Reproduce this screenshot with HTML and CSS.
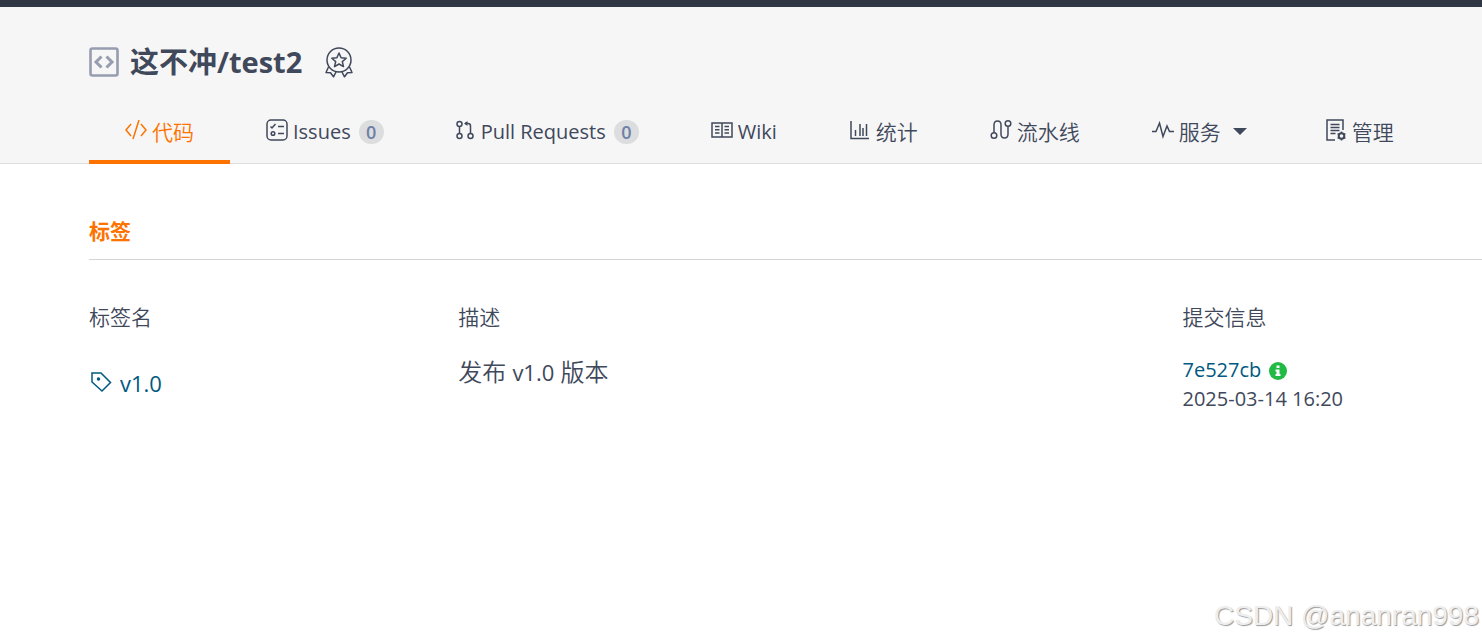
FILE: index.html
```
<!DOCTYPE html>
<html lang="zh-CN">

<head>
    <meta charset="UTF-8">
    <meta name="viewport" content="width=device-width, initial-scale=1.0">
    <title>这不冲/test2 标签</title>
    <link rel="stylesheet" href="styles.css">
</head>

<body>
    <div class="topbar"></div>
    <header class="header">
        <div class="project">
            <svg class="project-icon" viewBox="0 0 30 30" fill="none" stroke="#979db0">
                <rect x="1.5" y="1.5" width="27" height="27" rx="2" stroke-width="2.6" />
                <path d="M12.5 9.5L7 15l5.5 5.5M17.5 9.5L23 15l-5.5 5.5" stroke-width="3" />
            </svg>
            <h1 class="project-name">这不冲/test2</h1>
            <svg class="medal" viewBox="0 0 28 32" fill="none" stroke="#40485b" stroke-width="1.5" stroke-linejoin="round">
                <circle cx="14" cy="13" r="12" />
                <path d="M14 6l2.1 4.7 5.1.5-3.9 3.4 1.2 5-4.5-2.6-4.5 2.6 1.2-5-3.9-3.4 5.1-.5z" />
                <path d="M3.5 20L1 25.5l4.500.3 3 4L11 25M24.500 20l2.500 5.500-4.500.3-3 4L17 25" />
            </svg>
        </div>
        <nav class="tabs">
            <a class="tab active" href="#">
                <svg class="icon" viewBox="0 0 22 22" fill="none" stroke="currentColor" stroke-width="1.5">
                    <path d="M6 5L1 11l5 6M16 5l5 6-5 6M14 1L8 20" />
                </svg>
                <span>代码</span>
            </a>
            <a class="tab" href="#">
                <svg class="icon" viewBox="0 0 22 22" fill="none" stroke="currentColor" stroke-width="1.5">
                    <rect x="1" y="1" width="20" height="20" rx="4" />
                    <path d="M4.500 7.500l1.500 1.500 3.500-4M12 7.500h6M12 14.500h6" />
                    <circle cx="7" cy="14.500" r="1.800" />
                </svg>
                <span class="latin">Issues</span>
                <span class="count">0</span>
            </a>
            <a class="tab" href="#">
                <svg class="icon icon-pull" viewBox="0 0 18 22" fill="none" stroke="currentColor" stroke-width="1.500">
                    <circle cx="3.500" cy="5" r="2.500" />
                    <circle cx="3.500" cy="17" r="2.500" />
                    <circle cx="14.500" cy="17" r="2.500" />
                    <path d="M3.500 7.500v7M14.500 14.500V7q0-2.500-2.500-2.500H9" />
                    <path d="M11.500 2v5L8 4.500z" fill="currentColor" stroke="none" />
                </svg>
                <span class="latin">Pull Requests</span>
                <span class="count">0</span>
            </a>
            <a class="tab" href="#">
                <svg class="icon" viewBox="0 0 22 22" fill="none" stroke="currentColor" stroke-width="1.500">
                    <path d="M1 4h20v14H1zM11 4v14M4 7.500h4.500M4 10.800h4.500M4 14h4.500M13.500 7.500H18M13.500 10.800H18M13.500 14H18" />
                </svg>
                <span class="latin">Wiki</span>
            </a>
            <a class="tab" href="#">
                <svg class="icon" viewBox="0 0 22 22" fill="none" stroke="currentColor" stroke-width="1.500">
                    <path d="M2 2v17.500h18M6.500 17v-6M11 17V5M14 17V9M17.500 17V5" />
                </svg>
                <span>统计</span>
            </a>
            <a class="tab" href="#">
                <svg class="icon" viewBox="0 0 22 22" fill="none" stroke="currentColor" stroke-width="1.500">
                    <circle cx="4" cy="16.500" r="2.800" />
                    <circle cx="18" cy="4.500" r="2.800" />
                    <path d="M4 13.700V6q0-4 3.500-4T11 6v9q0 4 3.500 4t3.500-4V7.300" />
                </svg>
                <span>流水线</span>
            </a>
            <button class="tab" type="button">
                <svg class="icon" viewBox="0 0 22 22" fill="none" stroke="currentColor" stroke-width="1.500">
                    <path d="M0 12.500h4L7.500 4l3.500 13.500L15 7l2.500 5.500H22" />
                </svg>
                <span>服务</span>
                <span class="caret"></span>
            </button>
            <a class="tab" href="#">
                <svg class="icon" viewBox="0 0 22 22" fill="none" stroke="currentColor" stroke-width="1.500">
                    <path d="M10 21H2V1h16v10M5.500 5.500h9M5.500 8.500h9M5.500 11.500h9M5.500 14.500h5" />
                    <circle cx="16.500" cy="17" r="2.800" stroke-width="2" />
                    <path d="M16.500 12.500v2M16.500 19.500v2M12.600 14.700l1.800 1M18.600 18.300l1.800 1M12.600 19.300l1.800-1M18.600 15.700l1.800-1" />
                </svg>
                <span>管理</span>
            </a>
        </nav>
    </header>

    <main class="content">
        <h2 class="heading">标签</h2>
        <table class="tags">
            <thead>
                <tr>
                    <th class="col-name">标签名</th>
                    <th class="col-desc">描述</th>
                    <th>提交信息</th>
                </tr>
            </thead>
            <tbody>
                <tr>
                    <td>
                        <a class="tag-link" href="#">
                            <svg class="tag-icon" viewBox="0 0 24 24" fill="none" stroke="currentColor" stroke-width="1.500">
                                <path d="M3 2h9l9.500 9.500-8.500 8.500L3 11z" />
                                <circle cx="9.500" cy="8" r="1" fill="currentColor" />
                            </svg>
                            <span>v1.0</span>
                        </a>
                    </td>
                    <td class="desc">发布 <span class="version">v1.0</span> 版本</td>
                    <td class="commit">
                        <a class="sha" href="#">7e527cb</a>
                        <svg class="info" viewBox="0 0 18 18">
                            <circle cx="9" cy="9" r="9" fill="#21ba45" />
                            <path d="M7.500 3.500h3v2.500h-3zM6.500 7.500h4V12h1v2h-5v-2h1V9.500h-1z" fill="#fff" />
                        </svg>
                        <div class="date">2025-03-14 16:20</div>
                    </td>
                </tr>
            </tbody>
        </table>
    </main>
    <div class="watermark">CSDN @ananran998</div>
</body>

</html>
```
FILE: styles.css
```
* {
    margin: 0;
    padding: 0;
    box-sizing: border-box;
}

body {
    min-height: 100vh;
    position: relative;
    background-color: #fff;
    color: #40485b;
    font-family: "Open Sans", "Noto Sans CJK SC", sans-serif;
    font-size: 21px;
    overflow-x: hidden;
}

a {
    color: #005980;
    text-decoration: none;
}

.topbar {
    height: 7px;
    background-color: #303643;
}

.header {
    padding: 32px 0 0 89px;
    background-color: #f6f6f6;
    border-bottom: 1px solid #dcddde;
}

.project {
    display: flex;
    align-items: center;
    height: 46px;
}

.project-icon {
    width: 30px;
    height: 30px;
}

.project-name {
    margin: 0 23px 0 11px;
    font-size: 29px;
    line-height: 46px;
}

.medal {
    width: 28px;
    height: 32px;
    margin-top: 2px;
}

.tabs {
    display: flex;
    margin-top: 16px;
    margin-bottom: -1px;
}

.tab {
    display: flex;
    align-items: center;
    height: 63px;
    padding: 2px 36px 0;
    border: none;
    border-bottom: 4px solid transparent;
    background: none;
    color: #40485b;
    font-family: inherit;
    font-size: 21px;
    font-weight: 350;
    line-height: 32px;
    white-space: nowrap;
}

.tab.active {
    color: #fe7300;
    border-bottom-color: #fe7300;
}

.icon {
    width: 22px;
    height: 22px;
    margin: 0 5px 3px 0;
}

.icon-pull {
    width: 18px;
    margin-right: 7px;
}

.latin {
    font-size: 20px;
    font-weight: 400;
}

.count {
    width: 25px;
    height: 24px;
    margin-left: 8px;
    border-radius: 12px;
    background-color: #dcddde;
    color: #6e7fa8;
    font-size: 18px;
    font-weight: 600;
    line-height: 24px;
    text-align: center;
}

.caret {
    margin: 0 6px 0 12px;
    border: 7px solid transparent;
    border-top-color: #40485b;
    border-bottom: none;
}

.content {
    padding: 47px 0 0 89px;
}

.heading {
    padding-bottom: 8px;
    border-bottom: 1px solid #d4d4d5;
    color: #fe7300;
    font-size: 21px;
    line-height: 40px;
}

.tags {
    width: 100%;
    margin-top: 41px;
    border-collapse: collapse;
    table-layout: fixed;
}

.tags th {
    font-weight: 350;
    line-height: 32px;
    text-align: left;
}

.tags td {
    padding-top: 22px;
    vertical-align: top;
}

.col-name {
    width: 26.5%;
}

.col-desc {
    width: 52%;
}

.tag-link {
    display: flex;
    align-items: center;
    margin-top: 12px;
    font-size: 22px;
    line-height: 32px;
}

.tag-icon {
    width: 24px;
    height: 24px;
    margin-right: 7px;
}

.tags .desc {
    padding-top: 23px;
    font-size: 24px;
    font-weight: 350;
    line-height: 32px;
}

.version {
    font-size: 22px;
    font-weight: 400;
}

.commit {
    font-size: 20px;
    line-height: 29px;
}

.info {
    width: 18px;
    height: 18px;
    margin-left: 2px;
    vertical-align: -3px;
}

.watermark {
    position: absolute;
    right: 3px;
    bottom: 8px;
    color: #eee;
    font-family: "Liberation Sans", Arial, sans-serif;
    font-size: 28px;
    line-height: 36px;
    text-shadow: 1px 1px 1px #999;
}
```
